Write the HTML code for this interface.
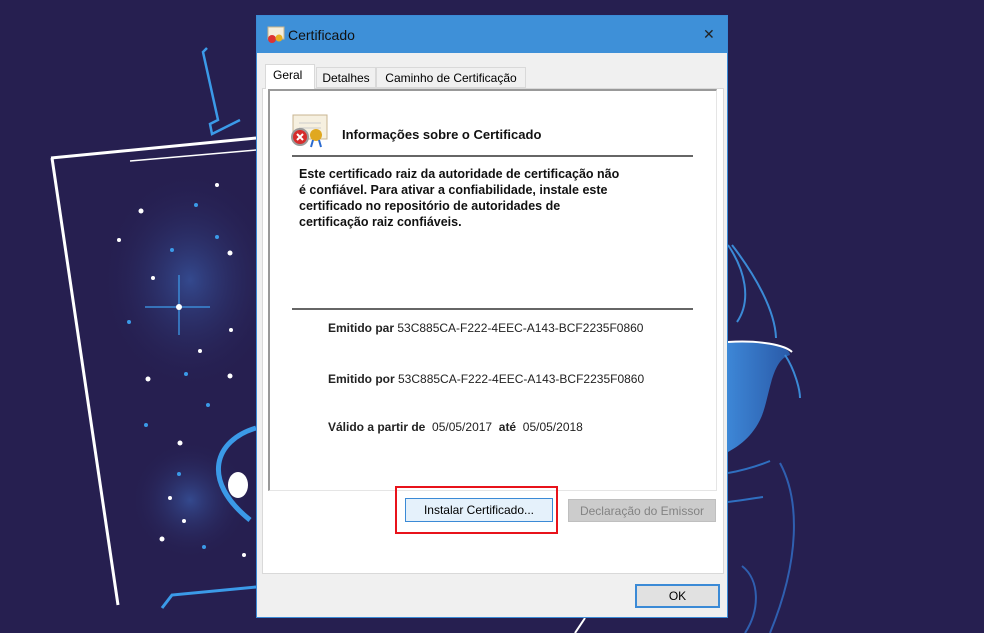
<!DOCTYPE html>
<html><head><meta charset="utf-8"><style>
body{margin:0;width:984px;height:633px;overflow:hidden;background:#261f50;font-family:"Liberation Sans",sans-serif;position:relative}
.a{position:absolute}
.dlg{left:256px;top:15px;width:472px;height:603px;background:#f0f0f0;border:1px solid #3b8ad6;box-sizing:border-box}
.title{left:0;top:0;width:470px;height:37px;background:#3e90d8;color:#111;font-size:14px}
.b{font-weight:bold;font-size:12.5px;color:#111}
.btn{border:1px solid #adadad;background:#e1e1e1;font-size:12px;text-align:center;line-height:22px;box-sizing:border-box}
</style></head><body>
<svg class="a" style="left:0;top:0" width="984" height="633">
<defs><radialGradient id="g"><stop offset="0" stop-color="#3a5ba8" stop-opacity=".7"/><stop offset="1" stop-color="#261f50" stop-opacity="0"/></radialGradient>
<linearGradient id="c" x1="0" x2="1"><stop offset="0" stop-color="#3d86d6"/><stop offset="1" stop-color="#2a5aa8"/></linearGradient></defs>
<ellipse cx="190" cy="280" rx="90" ry="110" fill="url(#g)"/>
<ellipse cx="190" cy="500" rx="60" ry="60" fill="url(#g)"/>
<polyline points="51,158 256,138" stroke="#fff" stroke-width="3" fill="none"/>
<polyline points="52,158 118,605" stroke="#fff" stroke-width="3" fill="none"/>
<line x1="130" y1="161" x2="256" y2="150" stroke="#fff" stroke-width="1.5"/>
<polyline points="207,48 203,52 218,120 210,124 212,134 240,120" stroke="#3b9ae8" stroke-width="2.5" fill="none"/>
<line x1="145" y1="307" x2="210" y2="307" stroke="#3b8ad6" stroke-width="1.5"/>
<line x1="179" y1="275" x2="179" y2="335" stroke="#3b8ad6" stroke-width="1.5"/>
<circle cx="179" cy="307" r="3" fill="#fff"/>
<g fill="#fff"><circle cx="141" cy="211" r="2.5"/><circle cx="217" cy="185" r="2"/><circle cx="119" cy="240" r="2"/><circle cx="230" cy="253" r="2.5"/><circle cx="153" cy="278" r="2"/><circle cx="231" cy="330" r="2"/><circle cx="200" cy="351" r="2"/><circle cx="148" cy="379" r="2.5"/><circle cx="230" cy="376" r="2.5"/><circle cx="180" cy="443" r="2.5"/><circle cx="170" cy="498" r="2"/><circle cx="184" cy="521" r="2"/><circle cx="162" cy="539" r="2.5"/><circle cx="244" cy="555" r="2"/></g>
<g fill="#3b9ae8"><circle cx="196" cy="205" r="2"/><circle cx="172" cy="250" r="2"/><circle cx="217" cy="237" r="2"/><circle cx="129" cy="322" r="2"/><circle cx="186" cy="374" r="2"/><circle cx="208" cy="405" r="2"/><circle cx="146" cy="425" r="2"/><circle cx="179" cy="474" r="2"/><circle cx="204" cy="547" r="2"/></g>
<path d="M256 428 C215 440 200 480 250 520" stroke="#3b9ae8" stroke-width="5" fill="none"/>
<ellipse cx="238" cy="485" rx="10" ry="13" fill="#fff"/>
<path d="M256 587 L172 595 L162 608" stroke="#3b9ae8" stroke-width="3" fill="none"/>
<path d="M728 245 C745 270 752 300 737 322" stroke="#3b8ad6" stroke-width="2" fill="none"/>
<path d="M732 245 C755 275 775 310 776 338" stroke="#3b8ad6" stroke-width="2" fill="none"/>
<path d="M728 342 C760 340 790 345 790 355 C770 360 770 400 760 420 C750 440 735 448 728 452 Z" fill="url(#c)"/>
<path d="M728 342 C760 340 785 345 792 352" stroke="#fff" stroke-width="2" fill="none"/>
<path d="M785 355 C795 370 800 390 800 398" stroke="#3b8ad6" stroke-width="2" fill="none"/>
<path d="M728 473 C745 470 760 465 770 461" stroke="#2f6fc0" stroke-width="2" fill="none"/>
<path d="M728 502 C745 500 755 498 763 497" stroke="#2f6fc0" stroke-width="2" fill="none"/>
<path d="M780 463 C800 500 800 560 770 633" stroke="#2f5fb0" stroke-width="2" fill="none"/>
<path d="M742 566 C760 580 760 610 745 633" stroke="#2f5fb0" stroke-width="2" fill="none"/>
<line x1="575" y1="633" x2="585" y2="618" stroke="#fff" stroke-width="2"/>
</svg>
<div class="a dlg">
 <div class="a title"><svg class="a" style="left:9px;top:10px" width="20" height="18"><rect x="2" y="1" width="16" height="12" fill="#f4eedc" stroke="#c9b48a"/><circle cx="6" cy="13" r="4" fill="#d33"/><circle cx="13" cy="12" r="3.5" fill="#e6b020"/></svg><span class="a" style="left:31px;top:11px">Certificado</span><span class="a" style="left:446px;top:10px;font-size:14px;color:#222">✕</span></div>
 <div class="a" style="left:5px;top:72px;width:460px;height:484px;background:#fff;border:1px solid #d9d9d9"></div>
 <div class="a" style="left:8px;top:48px;width:50px;height:25px;background:#fff;border:1px solid #d9d9d9;border-bottom:none;font-size:12px;line-height:20px;padding-left:7px;box-sizing:border-box">Geral</div>
 <div class="a" style="left:59px;top:51px;width:60px;height:21px;background:#f0f0f0;border:1px solid #d9d9d9;font-size:12px;line-height:20px;text-align:center;box-sizing:border-box">Detalhes</div>
 <div class="a" style="left:119px;top:51px;width:150px;height:21px;background:#f0f0f0;border:1px solid #d9d9d9;font-size:12px;line-height:20px;text-align:center;box-sizing:border-box">Caminho de Certificação</div>
 <div class="a" style="left:11px;top:73px;width:449px;height:402px;background:#fff;border-left:2px solid #999;border-top:2px solid #999;border-right:1px solid #e5e5e5;border-bottom:1px solid #e5e5e5;box-sizing:border-box"></div>
 <svg class="a" style="left:34px;top:97px" width="40" height="36"><rect x="2" y="2" width="34" height="24" fill="#f6f0e0" stroke="#c8b590"/><line x1="8" y1="10" x2="30" y2="10" stroke="#ccc"/><line x1="8" y1="15" x2="30" y2="15" stroke="#ccc"/><circle cx="9" cy="24" r="8" fill="#d62c2c" stroke="#999" stroke-width="2"/><path d="M6 21l6 6M12 21l-6 6" stroke="#fff" stroke-width="2"/><circle cx="25" cy="22" r="6" fill="#e0a820"/><path d="M22 27l-2 7M28 27l2 7" stroke="#2a6ad0" stroke-width="2"/></svg>
 <div class="a b" style="left:85px;top:111px;font-size:13px">Informações sobre o Certificado</div>
 <div class="a" style="left:35px;top:139px;width:401px;height:2px;background:#666"></div>
 <div class="a b" style="left:42px;top:150px;line-height:16px;width:400px">Este certificado raiz da autoridade de certificação não<br>é confiável. Para ativar a confiabilidade, instale este<br>certificado no repositório de autoridades de<br>certificação raiz confiáveis.</div>
 <div class="a" style="left:35px;top:292px;width:401px;height:2px;background:#666"></div>
 <div class="a" style="left:71px;top:305px;font-size:12px;color:#222"><b>Emitido par</b> 53C885CA-F222-4EEC-A143-BCF2235F0860</div>
 <div class="a" style="left:71px;top:356px;font-size:12px;color:#222"><b>Emitido por</b> 53C885CA-F222-4EEC-A143-BCF2235F0860</div>
 <div class="a" style="left:71px;top:404px;font-size:12px;color:#222"><b>Válido a partir de</b>&nbsp; 05/05/2017 &nbsp;<b>até</b>&nbsp; 05/05/2018</div>
 <div class="a" style="left:138px;top:470px;width:163px;height:48px;border:2px solid #e8131b;box-sizing:border-box"></div>
 <div class="a btn" style="left:148px;top:482px;width:148px;height:24px;background:#e5f1fb;border-color:#3b8ad6">Instalar Certificado...</div>
 <div class="a btn" style="left:311px;top:483px;width:148px;height:23px;background:#cccccc;border-color:#bfbfbf;color:#838383">Declaração do Emissor</div>
 <div class="a btn" style="left:378px;top:568px;width:85px;height:24px;border:2px solid #3b8ad6;line-height:20px">OK</div>
</div>
</body></html>
